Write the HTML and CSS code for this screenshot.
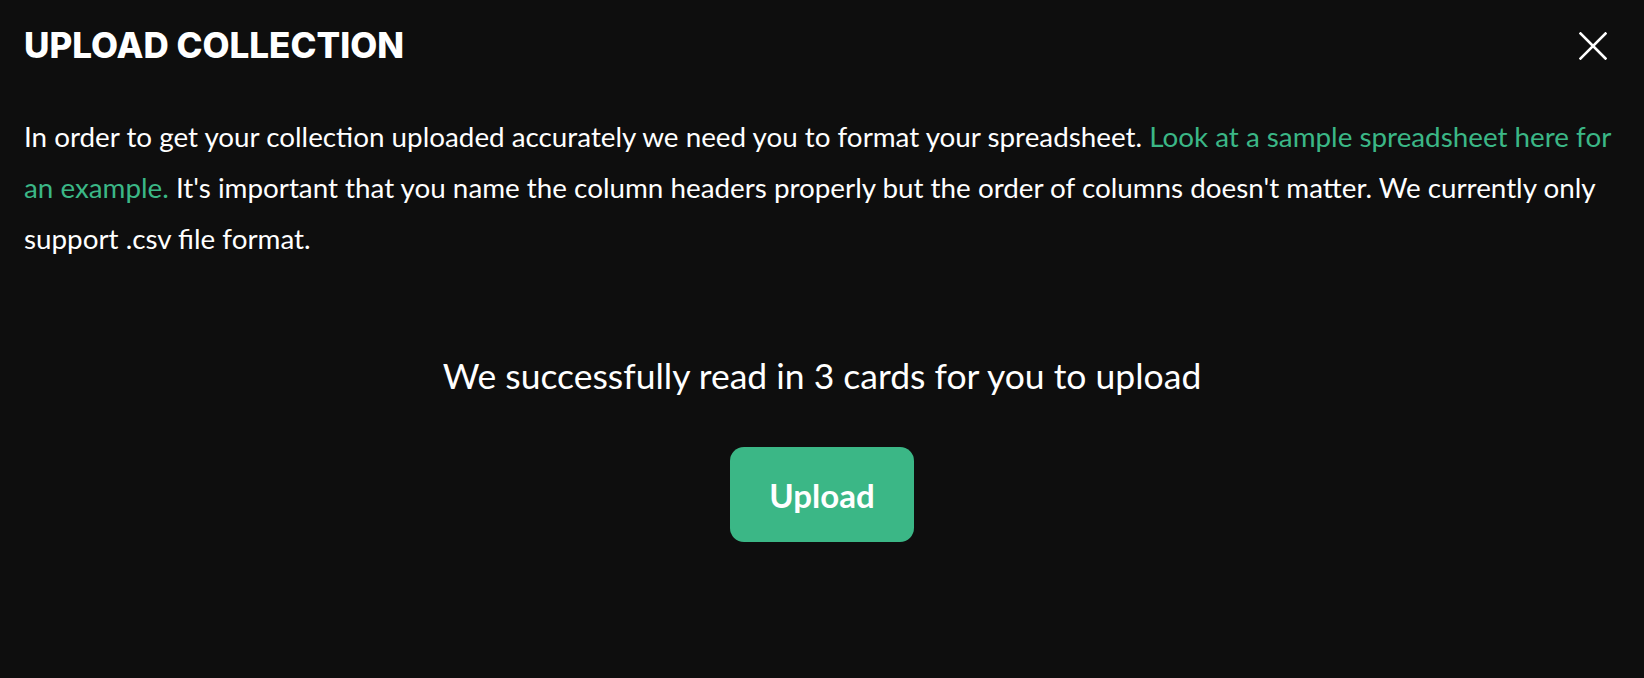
FILE: index.html
```html
<!DOCTYPE html>
<html lang="en">
<head>
<meta charset="utf-8">
<title>Upload Collection</title>
<link rel="stylesheet" href="styles.css">
</head>
<body>
<div class="modal">
  <div class="modal-header">
    <h1 class="modal-title">UPLOAD COLLECTION</h1>
    <button class="close-btn" aria-label="Close">
      <svg viewBox="0 0 28 28" width="28" height="28"><path d="M1.5 1.5 L26.5 26.5 M26.5 1.5 L1.5 26.5" stroke="#fff" stroke-width="2.6" stroke-linecap="square" fill="none"/></svg>
    </button>
  </div>
  <p class="intro">In order to get your collection uploaded accurately we need you to format your spreadsheet. <a class="link" href="#">Look at a sample spreadsheet here for an example.</a> It's important that you name the column headers properly but the order of columns doesn't matter. We currently only support .csv file format.</p>
  <div class="result">
    <p class="result-text">We successfully read in 3 cards for you to upload</p>
    <button class="upload-btn">Upload</button>
  </div>
</div>
</body>
</html>
```

FILE: styles.css
```css
html, body {
  margin: 0;
  padding: 0;
  background: #0e0e0e;
  height: 100%;
}
.modal {
  padding: 25px 24px 0 24px;
  color: #ffffff;
  font-family: Lato, "Open Sans", sans-serif;
}
.modal-header {
  display: flex;
  justify-content: space-between;
  align-items: center;
}
.modal-title {
  margin: 0;
  font-family: Inter, "DejaVu Sans", sans-serif;
  font-weight: 800;
  font-size: 35px;
  line-height: 41px;
  letter-spacing: 0;
  color: #ffffff;
}
.close-btn {
  background: none;
  border: 0;
  padding: 0;
  margin-right: 13px;
  width: 28px;
  height: 28px;
  display: flex;
  cursor: pointer;
}
.intro {
  margin: 45px 0 0 0;
  font-size: 27.8px;
  line-height: 51px;
  font-weight: 400;
}
.link {
  color: #3bb786;
  text-decoration: none;
}
.result {
  display: flex;
  flex-direction: column;
  align-items: center;
  margin-top: 91px;
}
.result-text {
  margin: 0;
  font-size: 35.5px;
  line-height: 41px;
}
.upload-btn {
  margin-top: 51px;
  width: 184px;
  height: 95px;
  border: 0;
  border-radius: 14px;
  background: #3bb786;
  color: #ffffff;
  font-family: Lato, sans-serif;
  font-weight: 700;
  font-size: 33px;
  cursor: pointer;
}
```
